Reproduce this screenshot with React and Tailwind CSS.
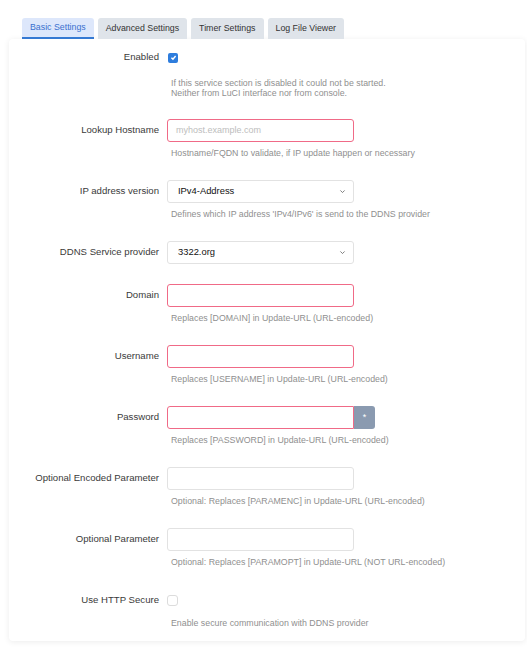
import React from 'react';

const font = { fontFamily: '"Liberation Sans", Arial, sans-serif' };

const tabs = ['Basic Settings', 'Advanced Settings', 'Timer Settings', 'Log File Viewer'];

function Desc({ children }) {
    return <div className="mt-[6px] pl-[4px] text-[8.8px] leading-[11px] text-[#8f8f8f]">{children}</div>;
}

function Row({ label, children, desc }) {
    return (
        <div className={`flex ${desc ? 'mb-[21px]' : 'mb-[20px]'}`}>
            <div className="w-[150px] h-[23px] flex items-center justify-end text-[9.6px] text-[#3a3a3a]">{label}</div>
            <div className="ml-[8px] flex flex-col">
                {children}
                {desc && <Desc>{desc}</Desc>}
            </div>
        </div>
    );
}

function TextInput({ invalid, placeholder, className = '' }) {
    return (
        <div
            className={`w-[187px] h-[23px] rounded-[3px] border bg-white flex items-center pl-[8px] text-[9px] ${invalid ? 'border-[#f06a87]' : 'border-[#e2e2e2]'} ${className}`}
        >
            {placeholder && <span className="text-[#bdbdbd]">{placeholder}</span>}
        </div>
    );
}

function Select({ value }) {
    return (
        <div className="w-[187px] h-[23px] rounded-[3px] border border-[#e2e2e2] bg-white flex items-center justify-between pl-[10px] pr-[7px] text-[9.4px] text-[#111]">
            <span>{value}</span>
            <svg width="7" height="7" viewBox="0 0 10 10" fill="none" stroke="#666" strokeWidth="1.2">
                <path d="M2 3.5 L5 6.5 L8 3.5" />
            </svg>
        </div>
    );
}

export default function App() {
    return (
        <div className="w-[527px] h-[656px] bg-white overflow-hidden" style={font}>
            <div className="pt-[18px] pl-[22px] flex gap-[4px]">
                {tabs.map((t, i) => (
                    <div
                        key={t}
                        className={`h-[21px] px-[8px] flex items-center rounded-t-[3px] text-[8.8px] ${i === 0 ? 'bg-[#dde7fb] text-[#3a70cf] border-b-2 border-[#3579d3]' : 'bg-[#dfe4ea] text-[#333]'}`}
                    >
                        {t}
                    </div>
                ))}
            </div>

            <div className="ml-[9px] mr-[2px] rounded-[4px] bg-white shadow-[0_1px_6px_rgba(0,0,0,0.08)] pt-[7px] pb-[12px]">
                {/* Enabled */}
                <div className="flex mb-[21px]">
                    <div className="w-[150px] h-[23px] flex items-center justify-end text-[9.6px] text-[#3a3a3a]">Enabled</div>
                    <div className="ml-[8px] flex flex-col">
                        <div className="h-[23px] flex items-center">
                            <div className="w-[10px] h-[10px] ml-[1px] rounded-[2px] bg-[#2e7ddd] flex items-center justify-center">
                                <svg width="7" height="7" viewBox="0 0 10 10" fill="none" stroke="#fff" strokeWidth="2">
                                    <path d="M2 5.2 L4.2 7.3 L8 2.8" />
                                </svg>
                            </div>
                        </div>
                        <div className="mt-[9px] pl-[4px] text-[8.8px] leading-[10px] text-[#8f8f8f]">
                            If this service section is disabled it could not be started.
                            <br />
                            Neither from LuCI interface nor from console.
                        </div>
                    </div>
                </div>

                <Row label="Lookup Hostname" desc="Hostname/FQDN to validate, if IP update happen or necessary">
                    <TextInput invalid placeholder="myhost.example.com" />
                </Row>
                <Row label="IP address version" desc="Defines which IP address 'IPv4/IPv6' is send to the DDNS provider">
                    <Select value="IPv4-Address" />
                </Row>
                <Row label="DDNS Service provider">
                    <Select value="3322.org" />
                </Row>
                <Row label="Domain" desc="Replaces [DOMAIN] in Update-URL (URL-encoded)">
                    <TextInput invalid />
                </Row>
                <Row label="Username" desc="Replaces [USERNAME] in Update-URL (URL-encoded)">
                    <TextInput invalid />
                </Row>
                <Row label="Password" desc="Replaces [PASSWORD] in Update-URL (URL-encoded)">
                    <div className="flex">
                        <TextInput invalid className="rounded-r-none" />
                        <div className="w-[21px] h-[23px] bg-[#8a9ab0] rounded-r-[3px] flex items-center justify-center text-white text-[9px]">*</div>
                    </div>
                </Row>
                <Row label="Optional Encoded Parameter" desc="Optional: Replaces [PARAMENC] in Update-URL (URL-encoded)">
                    <TextInput />
                </Row>
                <Row label="Optional Parameter" desc="Optional: Replaces [PARAMOPT] in Update-URL (NOT URL-encoded)">
                    <TextInput />
                </Row>

                {/* Use HTTP Secure */}
                <div className="flex">
                    <div className="w-[150px] h-[23px] flex items-center justify-end text-[9.6px] text-[#3a3a3a]">Use HTTP Secure</div>
                    <div className="ml-[8px] flex flex-col">
                        <div className="h-[23px] flex items-center">
                            <div className="w-[11px] h-[11px] rounded-[3px] border border-[#dcdcdc] bg-white" />
                        </div>
                        <Desc>Enable secure communication with DDNS provider</Desc>
                    </div>
                </div>
            </div>
        </div>
    );
}
